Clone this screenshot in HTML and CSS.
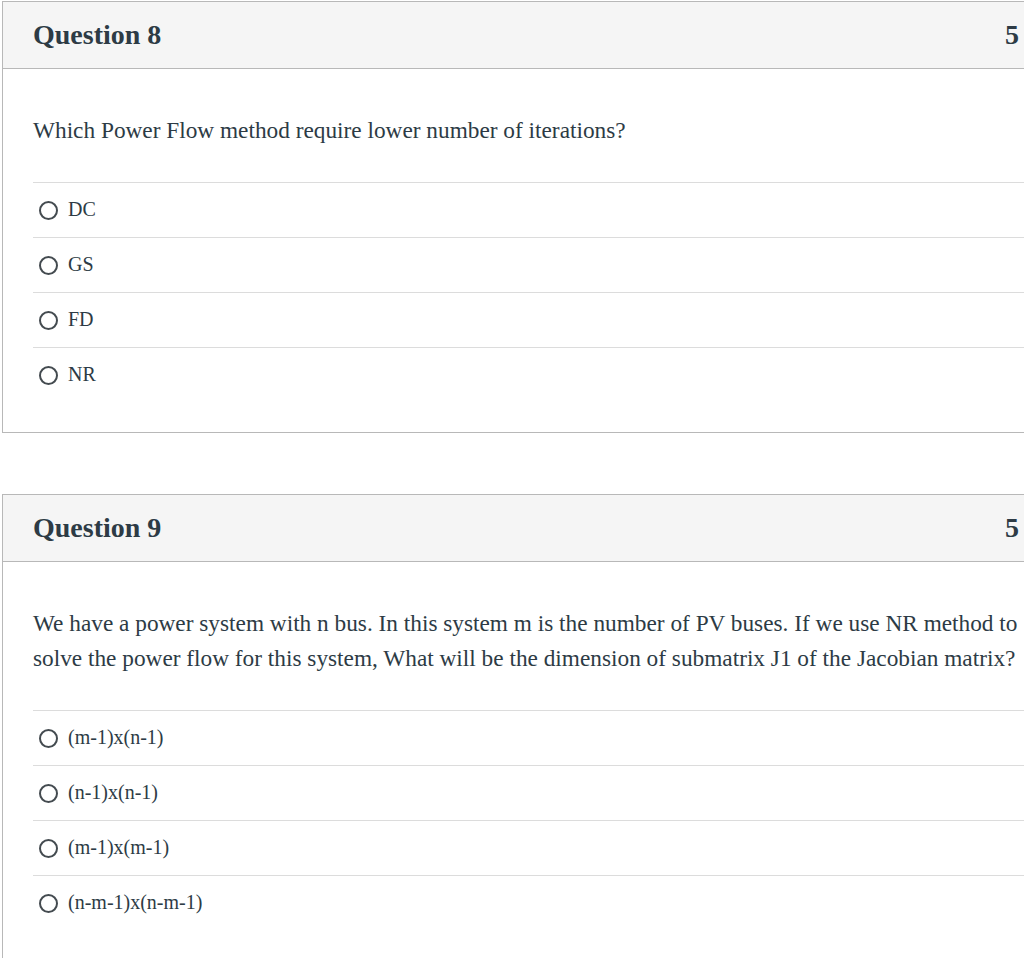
FILE: index.html
```html
<!DOCTYPE html>
<html>
<head>
<meta charset="utf-8">
<link rel="stylesheet" href="styles.css">
</head>
<body>
<div class="page">
  <div class="card">
    <div class="card-header">
      <h2 class="title">Question 8</h2>
      <span class="points">5</span>
    </div>
    <div class="card-body">
      <p class="question">Which Power Flow method require lower number of iterations?</p>
      <ul class="answers">
        <li class="answer"><span class="radio"></span><span class="label">DC</span></li>
        <li class="answer"><span class="radio"></span><span class="label">GS</span></li>
        <li class="answer"><span class="radio"></span><span class="label">FD</span></li>
        <li class="answer"><span class="radio"></span><span class="label">NR</span></li>
      </ul>
    </div>
  </div>

  <div class="card card-second">
    <div class="card-header">
      <h2 class="title">Question 9</h2>
      <span class="points">5</span>
    </div>
    <div class="card-body">
      <p class="question">We have a power system with n bus. In this system m is the number of PV buses. If we use NR method to solve the power flow for this system, What will be the dimension of submatrix J1 of the Jacobian matrix?</p>
      <ul class="answers">
        <li class="answer"><span class="radio"></span><span class="label">(m-1)x(n-1)</span></li>
        <li class="answer"><span class="radio"></span><span class="label">(n-1)x(n-1)</span></li>
        <li class="answer"><span class="radio"></span><span class="label">(m-1)x(m-1)</span></li>
        <li class="answer"><span class="radio"></span><span class="label">(n-m-1)x(n-m-1)</span></li>
      </ul>
    </div>
  </div>
</div>
</body>
</html>
```

FILE: styles.css
```css
html, body {
  margin: 0;
  padding: 0;
  background: #ffffff;
  overflow: hidden;
}

body {
  font-family: "Liberation Serif", "Times New Roman", serif;
  color: #2d3b45;
}

.page {
  padding: 1px 0 0 2px;
  width: 1200px;
}

.card {
  width: 1089px;
  border: 1px solid #b8b8b8;
  background: #ffffff;
}

.card-second {
  margin-top: 61px;
}

.card-header {
  display: flex;
  align-items: center;
  justify-content: space-between;
  height: 66px;
  padding: 0 30px;
  background: #f5f5f5;
  border-bottom: 1px solid #b8b8b8;
}

.title {
  margin: 0;
  font-size: 28px;
  font-weight: bold;
  line-height: 1;
}

.points {
  font-size: 28px;
  font-weight: bold;
  line-height: 1;
  margin-right: 43px;
}

.card-body {
  padding: 44px 59px 30px 30px;
}

.question {
  margin: 0 0 34px 0;
  font-size: 23.3px;
  line-height: 35px;
}

.answers {
  list-style: none;
  margin: 0;
  padding: 0;
}

.answer {
  display: flex;
  align-items: center;
  height: 54px;
  border-top: 1px solid #dcdcdc;
  padding-left: 6px;
}

.radio {
  box-sizing: border-box;
  width: 19px;
  height: 19px;
  border: 2px solid #444b50;
  border-radius: 50%;
  margin-right: 10px;
  flex: none;
}

.label {
  font-size: 20px;
  line-height: 1;
  padding-bottom: 3px;
}
```
